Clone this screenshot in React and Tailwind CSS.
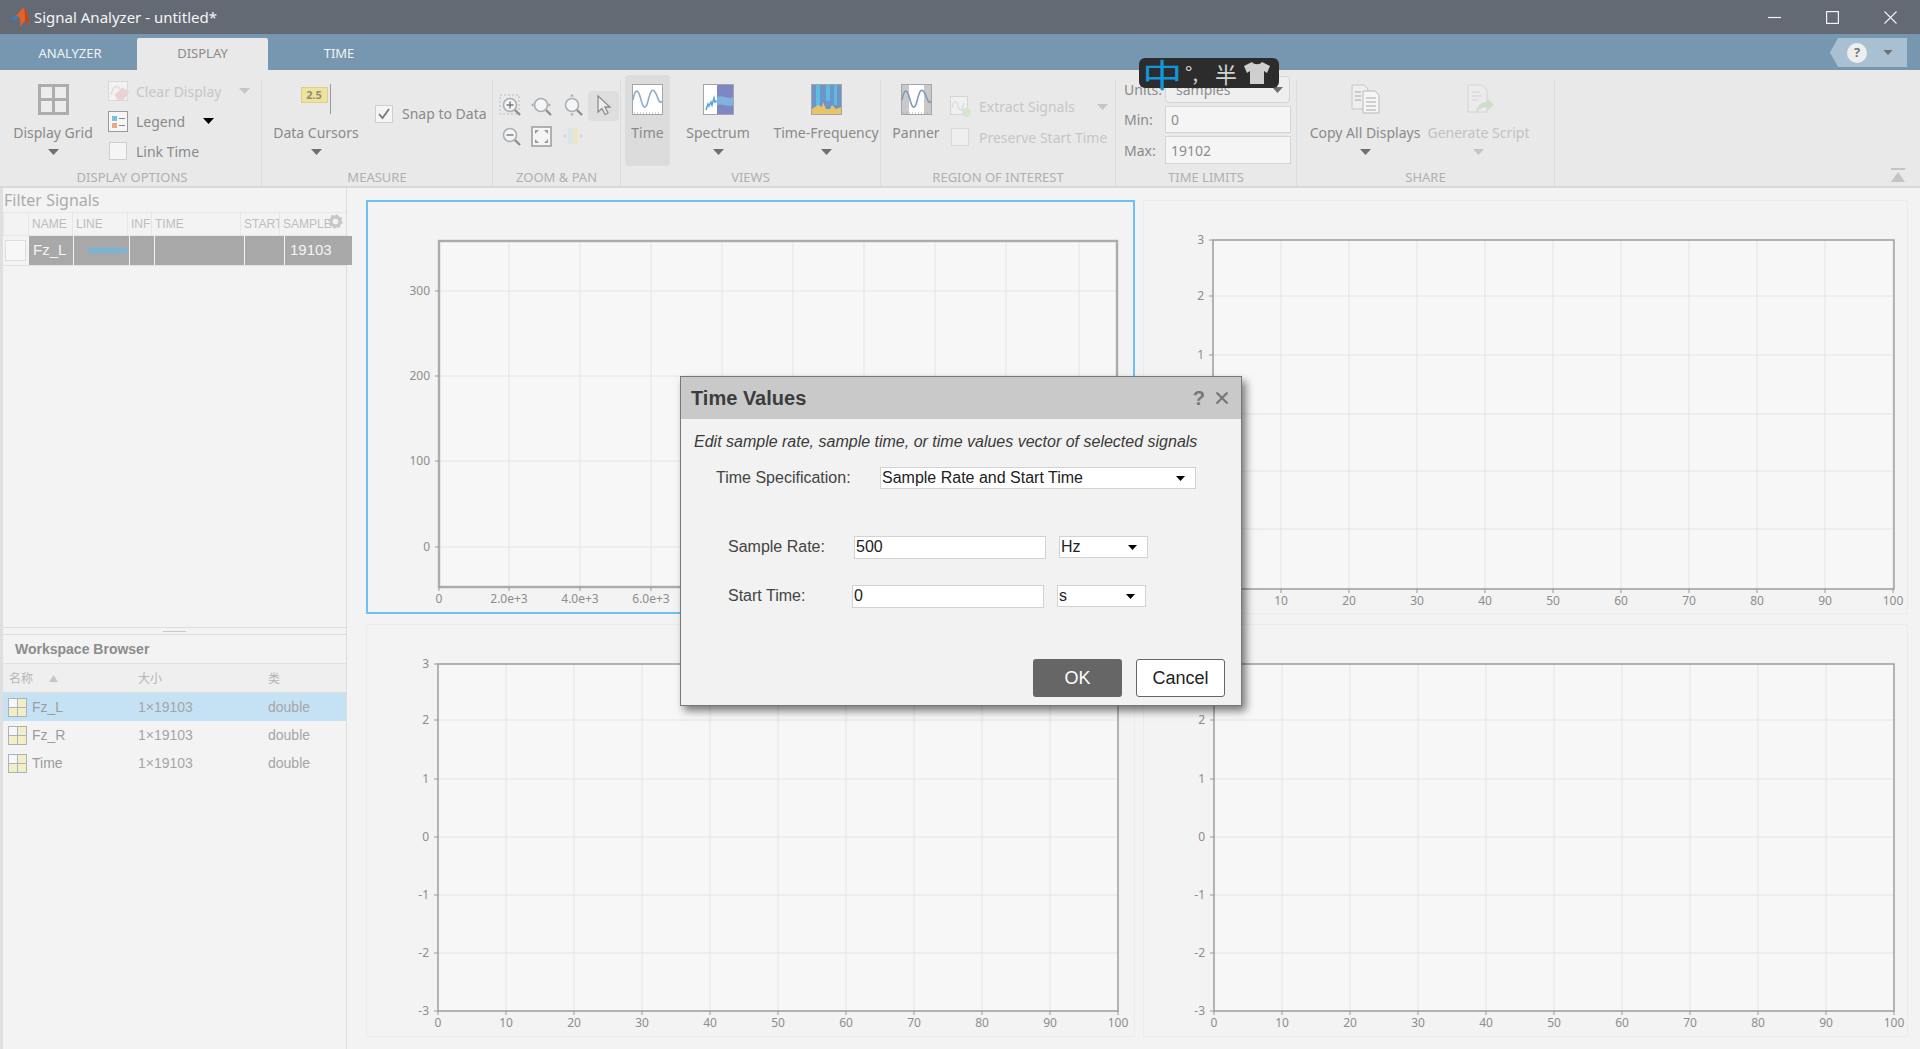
import React from 'react';

const uiFont = { fontFamily: '"Noto Sans", sans-serif' };

function Caret({ className = 'text-[#6f6f6f]', w = 11, h = 6 }) {
    return (
        <svg width={w} height={h} viewBox="0 0 11 6" className={className}>
            <path d="M0 0h11L5.5 6z" fill="currentColor" />
        </svg>
    );
}

function SineFrame({ children, stroke = '#8faecb' }) {
    return (
        <svg width="31" height="31" viewBox="0 0 31 31">
            <rect x="0.5" y="0.5" width="30" height="30" fill="#fff" stroke="#a5a5a5" />
            {children}
            <path d="M1 16C3 5 6 4 8.5 14s5 13 7.5 3 4-13 7-9 4 14 7 9" fill="none" stroke={stroke} strokeWidth="1.6" />
            <path d="M2 29h27" stroke="#a5a5a5" strokeDasharray="1 2" />
        </svg>
    );
}

function GridIcon() {
    return (
        <svg width="31" height="31" viewBox="0 0 31 31">
            <rect width="31" height="31" fill="#adadad" />
            <rect x="3" y="3" width="11" height="11" fill="#ececec" />
            <rect x="17" y="3" width="11" height="11" fill="#ececec" />
            <rect x="3" y="17" width="11" height="11" fill="#ececec" />
            <rect x="17" y="17" width="11" height="11" fill="#ececec" />
        </svg>
    );
}

function ClearIcon() {
    return (
        <svg width="22" height="21" viewBox="0 0 22 21">
            <rect x="0.5" y="0.5" width="19" height="19" fill="#f2f2f2" stroke="#d8d8d8" />
            <path d="M3 14C5 5 9 3 12 8" fill="none" stroke="#dedede" strokeWidth="1.5" />
            <path d="M7 14l7-7 7 4-6 8H10z" fill="#efcfd0" stroke="#dcdcdc" />
        </svg>
    );
}

function LegendIcon() {
    return (
        <svg width="20" height="21" viewBox="0 0 20 21">
            <rect x="0.5" y="0.5" width="19" height="20" fill="#f6f6f6" stroke="#9a9a9a" />
            <rect x="4" y="5" width="5" height="5" fill="#79bfe0" />
            <rect x="4" y="12" width="5" height="5" fill="#eba98a" />
            <path d="M11 7.5h6M11 14.5h6" stroke="#888" />
        </svg>
    );
}

function CursorIcon() {
    return (
        <div className="flex h-[30px] w-[31px]">
            <div className="mt-[3px] flex h-[16px] w-[27px] items-center justify-center bg-[#efe39a] border border-[#d9cf8f] text-[11px] font-bold text-[#8d8d7a]">2.5</div>
            <div className="ml-[2px] h-[30px] w-[1px] bg-[#999]" />
        </div>
    );
}

function Magnifier({ plus, minus, arrows, vertical, dashed }) {
    return (
        <svg width="24" height="24" viewBox="0 0 24 24">
            {dashed && <rect x="1" y="1" width="19" height="19" fill="none" stroke="#bbb" strokeDasharray="2 2" />}
            <circle cx="11" cy="11" r="6.5" fill="#f5f5f5" stroke="#a8b0b6" strokeWidth="1.6" />
            <path d="M16 16l5 5" stroke="#8b8b8b" strokeWidth="2.2" />
            {plus && <path d="M7.5 11h7M11 7.5v7" stroke="#777" strokeWidth="1.4" />}
            {minus && <path d="M7.5 11h7" stroke="#777" strokeWidth="1.4" />}
            {arrows && <path d="M1 11l2.5-2v4zM21 11l-2.5-2v4z" fill="#aaa" />}
            {vertical && <path d="M11 0l2 2.5H9zM11 22l2-2.5H9z" fill="#aaa" />}
        </svg>
    );
}

function ZoomCell({ children, active }) {
    return (
        <div className={`flex h-[30px] w-[31px] items-center justify-center ${active ? 'rounded bg-[#dedede]' : ''}`}>
            {children}
        </div>
    );
}

function BigButton({ icon, label, caret, disabled, active, className = '' }) {
    const pad = active ? 'mt-[5px] h-[91px] pt-[9px] rounded bg-[#dcdcdc]' : 'pt-[14px]';
    return (
        <div className={`flex flex-col items-center ${pad} ${className}`}>
            <div className={`flex h-[30px] w-[31px] items-center justify-center ${disabled ? 'opacity-40' : ''}`}>{icon}</div>
            <div className={`mt-[9px] whitespace-nowrap text-[14px] leading-[19px] ${disabled ? 'text-[#c2c2c2]' : 'text-[#8a8a8a]'}`}>{label}</div>
            {caret && (
                <div className="mt-[7px]">
                    <Caret className={disabled ? 'text-[#c4c4c4]' : 'text-[#6f6f6f]'} />
                </div>
            )}
        </div>
    );
}

function Section({ width, label, children }) {
    return (
        <div className="flex flex-col" style={{ width }}>
            <div className="flex h-[98px]">{children}</div>
            <div className="h-[18px] text-center text-[13px] leading-[18px] text-[#b0b0b0]">{label}</div>
        </div>
    );
}

function Sep() {
    return <div className="mt-[10px] h-[106px] w-[1px] bg-[#dcdcdc]" />;
}

function LimitRow({ label, value, tall }) {
    return (
        <div className={`flex items-center ${tall ? 'h-[28px]' : 'h-[27px]'}`}>
            <div className="w-[41px] text-[14px] text-[#8a8a8a]">{label}</div>
            <div className="flex h-full w-[126px] items-center border border-[#d4d4d4] bg-[#f5f5f5] pl-[5px] text-[14px] text-[#8d8d8d]">{value}</div>
        </div>
    );
}

function Ribbon() {
    return (
        <div style={uiFont} className="flex h-[116px] bg-[#e9e9e9] pl-[3px]">
            <Section width={258} label="DISPLAY OPTIONS">
                <BigButton className="ml-[6px] w-[88px]" icon={<GridIcon />} label="Display Grid" caret />
                <div className="ml-[11px] flex flex-col pt-[6px]">
                    <div className="flex h-[30px] items-center">
                        <div className="w-[28px]"><ClearIcon /></div>
                        <span className="text-[14px] text-[#c6c6c6]">Clear Display</span>
                        <Caret className="ml-[18px] text-[#c6c6c6]" />
                    </div>
                    <div className="flex h-[30px] items-center">
                        <div className="w-[28px]"><LegendIcon /></div>
                        <span className="text-[14px] text-[#8a8a8a]">Legend</span>
                        <Caret className="ml-[18px]" />
                    </div>
                    <div className="flex h-[30px] items-center">
                        <div className="w-[28px]"><div className="ml-[1px] h-[18px] w-[18px] border border-[#cfcfcf] bg-[#f5f5f5]" /></div>
                        <span className="text-[14px] text-[#8a8a8a]">Link Time</span>
                    </div>
                </div>
            </Section>
            <Sep />
            <Section width={230} label="MEASURE">
                <BigButton className="ml-[8px] w-[92px]" icon={<CursorIcon />} label="Data Cursors" caret />
                <div className="ml-[13px] flex h-[72px] items-end pb-[0px]">
                    <div className="mb-[18px] flex items-center">
                        <div className="flex h-[18px] w-[18px] items-center justify-center border border-[#cfcfcf] bg-[#f5f5f5]">
                            <svg width="14" height="14" viewBox="0 0 14 14"><path d="M2 7l3.5 4L12 2" fill="none" stroke="#777" strokeWidth="1.8" /></svg>
                        </div>
                        <span className="ml-[9px] whitespace-nowrap text-[14px] text-[#8a8a8a]">Snap to Data</span>
                    </div>
                </div>
            </Section>
            <Sep />
            <Section width={127} label="ZOOM & PAN">
                <div className="ml-[2px] mt-[21px] grid h-[60px] grid-cols-[31px_31px_31px_31px]">
                    <ZoomCell><Magnifier plus dashed /></ZoomCell>
                    <ZoomCell><Magnifier arrows /></ZoomCell>
                    <ZoomCell><Magnifier vertical /></ZoomCell>
                    <ZoomCell active>
                        <svg width="20" height="24" viewBox="0 0 20 24"><path d="M4 2v16l4-3.5 3 6 3-1.5-3-6h5z" fill="#ededed" stroke="#8c8c8c" strokeWidth="1.3" /></svg>
                    </ZoomCell>
                    <ZoomCell><Magnifier minus /></ZoomCell>
                    <ZoomCell>
                        <svg width="21" height="21" viewBox="0 0 21 21">
                            <rect x="1" y="1" width="19" height="19" fill="#f5f5f5" stroke="#a0a0a0" strokeWidth="1.6" />
                            <path d="M4 4l4 0-4 4zM17 4l-4 0 4 4zM4 17l4 0-4-4zM17 17l-4 0 4-4z" fill="#9a9a9a" />
                        </svg>
                    </ZoomCell>
                    <ZoomCell>
                        <svg width="22" height="18" viewBox="0 0 22 18">
                            <rect x="6" y="1" width="10" height="16" fill="#dbe6ea" />
                            <rect x="11" y="1" width="5" height="16" fill="#ece6c8" />
                            <path d="M1 9l3-2v4zM21 9l-3-2v4z" fill="#cfcfcf" />
                        </svg>
                    </ZoomCell>
                </div>
            </Section>
            <Sep />
            <Section width={259} label="VIEWS">
                <BigButton active className="ml-[4px] w-[45px]" label="Time" icon={
                    <SineFrame />
                } />
                <BigButton className="ml-[12px] w-[72px]" label="Spectrum" caret icon={
                    <svg width="31" height="31" viewBox="0 0 31 31">
                        <rect x="0.5" y="0.5" width="30" height="30" fill="#fff" stroke="#a5a5a5" />
                        <rect x="14" y="1" width="16" height="29" fill="#7f86c4" />
                        <path d="M14 13c6-3 10 3 16 0v8c-6 3-10-2-16 0z" fill="#7fb2de" />
                        <path d="M3 26l2-6 1 2 2-4 1 3 2-7 1 4 2-1" fill="none" stroke="#5fa4d6" strokeWidth="1.6" />
                    </svg>
                } />
                <BigButton className="ml-[18px] w-[108px]" label="Time-Frequency" caret icon={
                    <svg width="31" height="31" viewBox="0 0 31 31">
                        <rect x="0.5" y="0.5" width="30" height="30" fill="#6d95c9" stroke="#a5a5a5" />
                        <path d="M5 1h4v22H5zM15 1h4v16h-4zM23 1h3v20h-3z" fill="#5dbce0" />
                        <path d="M1 25l6-4 4 2 1-5 3 7 4 0 2-4 4 4 5-2v7H1z" fill="#e6c46a" />
                    </svg>
                } />
            </Section>
            <Sep />
            <Section width={234} label="REGION OF INTEREST">
                <BigButton className="ml-[10px] w-[50px]" label="Panner" icon={
                    <SineFrame stroke="#7f9cb8">
                        <rect x="1" y="1" width="7" height="29" fill="#c9c9c9" />
                        <rect x="23" y="1" width="7" height="29" fill="#c9c9c9" />
                    </SineFrame>
                } />
                <div className="ml-[9px] flex flex-col pt-[21px]">
                    <div className="flex h-[31px] items-center">
                        <div className="w-[29px]">
                            <svg width="22" height="22" viewBox="0 0 22 22">
                                <rect x="0.5" y="0.5" width="17" height="18" fill="#f0f0f0" stroke="#d5d5d5" />
                                <path d="M2 12c2-9 4-8 6-2s4 6 6-3" fill="none" stroke="#d3dde6" strokeWidth="1.3" />
                                <circle cx="16.5" cy="16.5" r="4.5" fill="#d4e6cc" />
                            </svg>
                        </div>
                        <span className="text-[14px] text-[#c6c6c6]">Extract Signals</span>
                        <Caret className="ml-[22px] text-[#c6c6c6]" />
                    </div>
                    <div className="flex h-[30px] items-center">
                        <div className="w-[29px]"><div className="ml-[1px] h-[18px] w-[18px] border border-[#d8d8d8] bg-[#efefef]" /></div>
                        <span className="whitespace-nowrap text-[14px] text-[#c6c6c6]">Preserve Start Time</span>
                    </div>
                </div>
            </Section>
            <Sep />
            <Section width={180} label="TIME LIMITS">
                <div className="ml-[8px] flex flex-col gap-[3px] pt-[6px]">
                    <div className="flex h-[27px] items-center">
                        <div className="w-[41px] text-[14px] text-[#8a8a8a]">Units:</div>
                        <div className="flex h-full w-[125px] items-center justify-between rounded border border-[#d4d4d4] bg-[#efefef] pl-[10px] pr-[6px] text-[14px] text-[#8d8d8d]">
                            samples
                            <Caret />
                        </div>
                    </div>
                    <LimitRow label="Min:" value="0" />
                    <LimitRow label="Max:" value="19102" tall />
                </div>
            </Section>
            <Sep />
            <Section width={257} label="SHARE">
                <BigButton className="ml-[12px] w-[112px]" label="Copy All Displays" caret icon={
                    <svg width="31" height="31" viewBox="0 0 31 31">
                        <path d="M2 1h12l4 4v20H2z" fill="#eeeeee" stroke="#c6c6c6" />
                        <path d="M13 7h12l4 4v18H13z" fill="#f5f5f5" stroke="#b9b9b9" />
                        <path d="M5 8h6M5 12h6M5 16h6M16 14h10M16 18h10M16 22h10M16 26h10" stroke="#a8a8a8" />
                    </svg>
                } />
                <BigButton disabled className="ml-[13px] w-[89px]" label="Generate Script" caret icon={
                    <svg width="31" height="31" viewBox="0 0 31 31">
                        <path d="M5 1h14l5 5v22H5z" fill="#f0f0f0" stroke="#b5b5b5" />
                        <path d="M9 8h8M9 12h10M9 16h6" stroke="#b5b5b5" />
                        <path d="M13 30c0-8 5-12 11-12v-4l7 7-7 6v-4c-5 0-8 2-11 7z" fill="#a8cfa0" />
                    </svg>
                } />
            </Section>
            <Sep />
            <div className="flex flex-1 items-end justify-end pb-[3px] pr-[14px]">
                <svg width="16" height="16" viewBox="0 0 16 16">
                    <path d="M1 1h14v2H1z" fill="#c4c4c4" />
                    <path d="M8 5l7 10H1z" fill="#c4c4c4" />
                </svg>
            </div>
        </div>
    );
}

const signalCols = 'grid-cols-[25px_44px_55px_24px_89px_39px_67px]';

function FilterTable() {
    const heads = ['', 'NAME', 'LINE', 'INF(', 'TIME', 'START', 'SAMPLE'];
    return (
        <div className="font-['Liberation_Sans',sans-serif]">
            <div className={`grid h-[24px] ${signalCols} border-y border-[#e6e6e6]`}>
                {heads.map((h, i) => (
                    <div key={i} className="flex items-center overflow-hidden whitespace-nowrap border-l border-[#e6e6e6] pl-[3px] text-[12px] text-[#bdbdbd]">{h}</div>
                ))}
            </div>
            <div className="relative">
                <div className={`grid h-[30px] ${signalCols} gap-x-[1px] border-b border-[#e3e3e3]`}>
                    <div className="flex items-center justify-center">
                        <div className="h-[21px] w-[21px] border border-[#dddddd] bg-[#f7f7f7]" />
                    </div>
                    <div className="flex items-center bg-[#a8a8a8] pl-[4px] text-[15px] text-[#f4f4f4]">Fz_L</div>
                    <div className="flex items-center bg-[#a8a8a8] pl-[14px]"><div className="h-[5px] w-[39px] bg-[#7ab3d6]" /></div>
                    <div className="bg-[#a8a8a8]" />
                    <div className="bg-[#a8a8a8]" />
                    <div className="bg-[#a8a8a8]" />
                    <div className="flex items-center bg-[#a8a8a8] pl-[5px] text-[15px] text-[#f4f4f4]">19103</div>
                </div>
                <svg width="15" height="15" viewBox="0 0 15 15" className="absolute right-[3px] top-[-22px]">
                    <circle cx="7.5" cy="7.5" r="4.5" fill="none" stroke="#c8c8c8" strokeWidth="3.4" />
                    <circle cx="7.5" cy="7.5" r="6.2" fill="none" stroke="#c8c8c8" strokeWidth="2" strokeDasharray="2.2 2.6" />
                </svg>
            </div>
        </div>
    );
}

function VarIcon() {
    return (
        <svg width="19" height="19" viewBox="0 0 19 19">
            <rect x="0.5" y="0.5" width="18" height="18" fill="#f4eec6" stroke="#a7b4c0" />
            <rect x="1" y="1" width="8" height="8" fill="#f7f7f7" />
            <path d="M9.5 1v17M1 9.5h17" stroke="#a7b4c0" />
        </svg>
    );
}

function WorkspaceRow({ name, selected }) {
    return (
        <div className={`grid h-[28px] grid-cols-[135px_130px_1fr] items-center text-[14px] text-[#a5a5a5] ${selected ? 'bg-[#c5e2f5]' : ''}`}>
            <div className="flex items-center pl-[5px]">
                <VarIcon />
                <span className="ml-[5px] text-[#9c9c9c]">{name}</span>
            </div>
            <div>1×19103</div>
            <div>double</div>
        </div>
    );
}

function Sidebar() {
    return (
        <div className="flex h-full w-[353px] shrink-0 bg-[#f3f3f3]">
            <div className="w-[3px] bg-[#dfdfdf]" />
            <div className="flex w-[344px] flex-col border-r border-[#dddddd]">
                <div style={uiFont} className="flex h-[24px] items-center pl-[1px] text-[16px] text-[#ababab]">Filter Signals</div>
                <FilterTable />
                <div className="flex-1" />
                <div className="flex h-[8px] items-center justify-center border-y border-[#dcdcdc]">
                    <div className="h-[1px] w-[23px] bg-[#c9c9c9]" />
                </div>
                <div className="h-[414px] font-['Liberation_Sans',sans-serif]">
                    <div className="flex h-[29px] items-center border-b border-[#e2e2e2] pl-[12px] text-[14px] font-bold text-[#8c8c8c]">Workspace Browser</div>
                    <div className="grid h-[29px] grid-cols-[135px_130px_1fr] items-center border-b border-[#dedede] bg-[#efefef] font-['Noto_Sans_CJK_SC',sans-serif] text-[12px] text-[#b5b5b5]">
                        <div className="flex items-center pl-[6px]">
                            名称
                            <svg width="9" height="7" viewBox="0 0 9 7" className="ml-[16px]"><path d="M4.5 0L9 7H0z" fill="#c6c6c6" /></svg>
                        </div>
                        <div>大小</div>
                        <div>类</div>
                    </div>
                    <WorkspaceRow name="Fz_L" selected />
                    <WorkspaceRow name="Fz_R" />
                    <WorkspaceRow name="Time" />
                </div>
            </div>
        </div>
    );
}

// axes are given in page coordinates, the viewBox maps them into the panel
function Plot({ box, axes, xs, ys, active }) {
    const inset = active ? 2 : 1;
    const vx = box.x + inset;
    const vy = box.y + inset;
    const vw = box.w - inset * 2;
    const vh = box.h - inset * 2;
    const frame = active ? '#ababab' : '#9a9a9a';
    return (
        <div className={`bg-[#f3f3f3] ${active ? 'border-2 border-[#6cc0f5]' : 'border border-[#ececec]'}`}>
            <svg width={vw} height={vh} viewBox={`${vx} ${vy} ${vw} ${vh}`} className="block" style={uiFont}>
                <rect x={axes.l} y={axes.t} width={axes.r - axes.l} height={axes.b - axes.t} fill="#f7f7f7" />
                {xs.map(([x]) => <line key={x} x1={x} x2={x} y1={axes.t} y2={axes.b} stroke="#e4e4e4" />)}
                {ys.map(([y]) => <line key={y} x1={axes.l} x2={axes.r} y1={y} y2={y} stroke="#e4e4e4" />)}
                <rect x={axes.l} y={axes.t} width={axes.r - axes.l} height={axes.b - axes.t} fill="none" stroke={frame} strokeWidth={active ? 2.4 : 1.4} />
                {ys.map(([y, label]) => (
                    <g key={y}>
                        <line x1={axes.l - 4} x2={axes.l} y1={y} y2={y} stroke="#999" />
                        <text x={axes.l - 9} y={y + 4} textAnchor="end" fontSize="12" fill="#8d8d8d">{label}</text>
                    </g>
                ))}
                {xs.map(([x, label]) => (
                    <g key={x}>
                        <line x1={x} x2={x} y1={axes.b} y2={axes.b + 4} stroke="#999" />
                        <text x={x} y={axes.b + 16} textAnchor="middle" fontSize="12" fill="#8d8d8d">{label}</text>
                    </g>
                ))}
            </svg>
        </div>
    );
}

const decades = ['0', '10', '20', '30', '40', '50', '60', '70', '80', '90', '100'];
const yUnits = ['3', '2', '1', '0', '-1', '-2', '-3'];

const xTicksFrom = (start) => decades.map((label, i) => [start + i * 68, label]);

const plotOneX = [
    [439, '0'], [509, '2.0e+3'], [580, '4.0e+3'], [651, '6.0e+3'], [722, '8.0e+3'],
    [793, '1.0e+4'], [864, '1.2e+4'], [935, '1.4e+4'], [1006, '1.6e+4'], [1079, '1.8e+4'],
];
const plotOneY = [[291, '300'], [376, '200'], [461, '100'], [547, '0']];
const topY = [240, 296, 355, 414, 471, 529, 589].map((y, i) => [y, yUnits[i]]);
const lowY = [664, 720, 779, 837, 895, 953, 1011].map((y, i) => [y, yUnits[i]]);

function PlotGrid() {
    return (
        <div className="grid flex-1 grid-cols-[769px_765px] grid-rows-[414px_413px] gap-x-[8px] gap-y-[10px] pl-[13px] pt-[12px]">
            <Plot active box={{ x: 366, y: 200, w: 769, h: 414 }} axes={{ l: 439, t: 241, r: 1117, b: 587 }} xs={plotOneX} ys={plotOneY} />
            <Plot box={{ x: 1143, y: 200, w: 765, h: 414 }} axes={{ l: 1213, t: 240, r: 1894, b: 589 }} xs={xTicksFrom(1213)} ys={topY} />
            <Plot box={{ x: 366, y: 624, w: 769, h: 413 }} axes={{ l: 438, t: 664, r: 1118, b: 1011 }} xs={xTicksFrom(438)} ys={lowY} />
            <Plot box={{ x: 1143, y: 624, w: 765, h: 413 }} axes={{ l: 1214, t: 664, r: 1894, b: 1011 }} xs={xTicksFrom(1214)} ys={lowY} />
        </div>
    );
}

function DialogSelect({ width, children }) {
    return (
        <div className="flex h-[22px] items-center justify-between border border-[#d2d2d2] bg-white pl-[1px] pr-[10px] text-[16px] text-[#222]" style={{ width }}>
            {children}
            <Caret className="text-black" w={9} h={5} />
        </div>
    );
}

function DialogInput({ width, value }) {
    return (
        <div className="flex h-[23px] items-center border border-[#d2d2d2] bg-white pl-[1px] text-[16px] text-[#222]" style={{ width }}>{value}</div>
    );
}

function TimeValuesDialog() {
    return (
        <div className="absolute left-[680px] top-[376px] z-10 h-[330px] w-[562px] border border-[#777] bg-[#f2f2f2] font-['Liberation_Sans',sans-serif] shadow-[4px_5px_8px_rgba(0,0,0,0.5)]">
            <div className="flex h-[42px] items-center justify-between bg-[#c9c9c9] pl-[10px] pr-[12px]">
                <div className="text-[20px] font-bold text-[#3c3c3c]">Time Values</div>
                <div className="flex items-center gap-[10px] text-[#777]">
                    <span className="text-[20px] font-bold leading-none">?</span>
                    <svg width="14" height="14" viewBox="0 0 14 14"><path d="M1.5 1.5l11 11M12.5 1.5l-11 11" stroke="currentColor" strokeWidth="2.2" /></svg>
                </div>
            </div>
            <div className="pl-[13px] pt-[12px] text-[16px] italic leading-[22px] text-[#3a3a3a]">Edit sample rate, sample time, or time values vector of selected signals</div>
            <div className="mt-[13px] flex items-center pl-[35px]">
                <div className="w-[164px] text-[16px] text-[#444]">Time Specification:</div>
                <DialogSelect width={316}>Sample Rate and Start Time</DialogSelect>
            </div>
            <div className="mt-[45px] flex items-center pl-[47px]">
                <div className="w-[126px] text-[16px] text-[#444]">Sample Rate:</div>
                <DialogInput width={192} value="500" />
                <div className="ml-[13px]"><DialogSelect width={89}>Hz</DialogSelect></div>
            </div>
            <div className="mt-[25px] flex items-center pl-[47px]">
                <div className="w-[124px] text-[16px] text-[#444]">Start Time:</div>
                <DialogInput width={192} value="0" />
                <div className="ml-[13px]"><DialogSelect width={89}>s</DialogSelect></div>
            </div>
            <div className="mt-[51px] flex justify-end gap-[14px] pr-[16px]">
                <button className="h-[38px] w-[89px] rounded-[3px] bg-[#666] text-[18px] text-white">OK</button>
                <button className="h-[38px] w-[89px] rounded-[3px] border border-[#666] bg-white text-[18px] text-[#222]">Cancel</button>
            </div>
        </div>
    );
}

function ImeBar() {
    return (
        <div className="absolute left-[1139px] top-[58px] z-10 flex h-[30px] w-[140px] items-center rounded-md bg-[#2c2c2c] font-['Noto_Sans_CJK_SC',sans-serif] text-[#d2d2d2]">
            <span className="ml-[7px] w-[30px] scale-x-125 text-center text-[32px] leading-[30px] text-[#1296db]">中</span>
            <span className="ml-[9px] w-[24px] text-[20px] leading-[30px]">°,</span>
            <span className="ml-[5px] w-[24px] text-center text-[22px] leading-[30px]">半</span>
            <svg width="28" height="24" viewBox="0 0 28 24" className="ml-[5px]">
                <path d="M9 1c2 3 8 3 10 0l8 4-3 7-3-2v13H7V10l-3 2-3-7z" fill="#cfcfcf" />
            </svg>
        </div>
    );
}

function TitleBar() {
    return (
        <div style={uiFont} className="flex h-[34px] items-center justify-between bg-[#646a73] pl-[11px] pr-[23px]">
            <div className="flex items-center">
                <svg width="19" height="19" viewBox="0 0 19 19">
                    <path d="M0 10l5-3 3 2-4 3z" fill="#3f7fb5" />
                    <path d="M5 7c3-1 5-7 8-7 2 0 4 10 6 16-2-1-3-3-5-3-2 1-3 5-5 6 1-4 0-8-1-10z" fill="#e2622a" />
                    <path d="M13 0c2 0 4 10 6 16-2-1-3-3-5-3 0-5 0-9-1-13z" fill="#c9431b" />
                </svg>
                <span className="ml-[4px] text-[15px] text-[#f5f5f5]">Signal Analyzer - untitled*</span>
            </div>
            <div className="flex items-center gap-[45px] text-[#f3f3f3]">
                <svg width="13" height="13" viewBox="0 0 13 13"><path d="M0 6.5h13" stroke="currentColor" strokeWidth="1.2" /></svg>
                <svg width="13" height="13" viewBox="0 0 13 13"><rect x="0.6" y="0.6" width="11.8" height="11.8" fill="none" stroke="currentColor" strokeWidth="1.2" /></svg>
                <svg width="13" height="13" viewBox="0 0 13 13"><path d="M0.5 0.5l12 12M12.5 0.5l-12 12" stroke="currentColor" strokeWidth="1.1" /></svg>
            </div>
        </div>
    );
}

function TabStrip() {
    return (
        <div style={uiFont} className="flex h-[36px] items-end justify-between bg-[#7797b0] text-[13px]">
            <div className="flex h-[32px]">
                <div className="flex w-[137px] items-center justify-center pl-[3px] text-[#f2f2f2]">ANALYZER</div>
                <div className="flex w-[131px] items-center justify-center rounded-t-[2px] bg-[#e9e9e9] text-[#8a8a8a]">DISPLAY</div>
                <div className="flex w-[142px] items-center justify-center text-[#f2f2f2]">TIME</div>
            </div>
            <div className="mb-[3px] mr-[13px] flex h-[29px] w-[77px] items-center justify-end bg-[#a9bfd2] pr-[14px] [clip-path:polygon(8px_0,100%_0,100%_100%,8px_100%,0_50%)]">
                <div className="flex h-[20px] w-[20px] items-center justify-center rounded-full bg-[#eeeeee] text-[13px] font-bold text-[#777]">?</div>
                <Caret className="ml-[16px] text-[#6f6f6f]" w={10} h={5} />
            </div>
        </div>
    );
}

export default function App() {
    return (
        <div className="relative flex h-[1049px] w-[1920px] flex-col overflow-hidden bg-[#f3f3f3]">
            <TitleBar />
            <TabStrip />
            <Ribbon />
            <div className="h-[2px] bg-[#d9d9d9]" />
            <div className="flex flex-1 overflow-hidden">
                <Sidebar />
                <PlotGrid />
            </div>
            <TimeValuesDialog />
            <ImeBar />
        </div>
    );
}
